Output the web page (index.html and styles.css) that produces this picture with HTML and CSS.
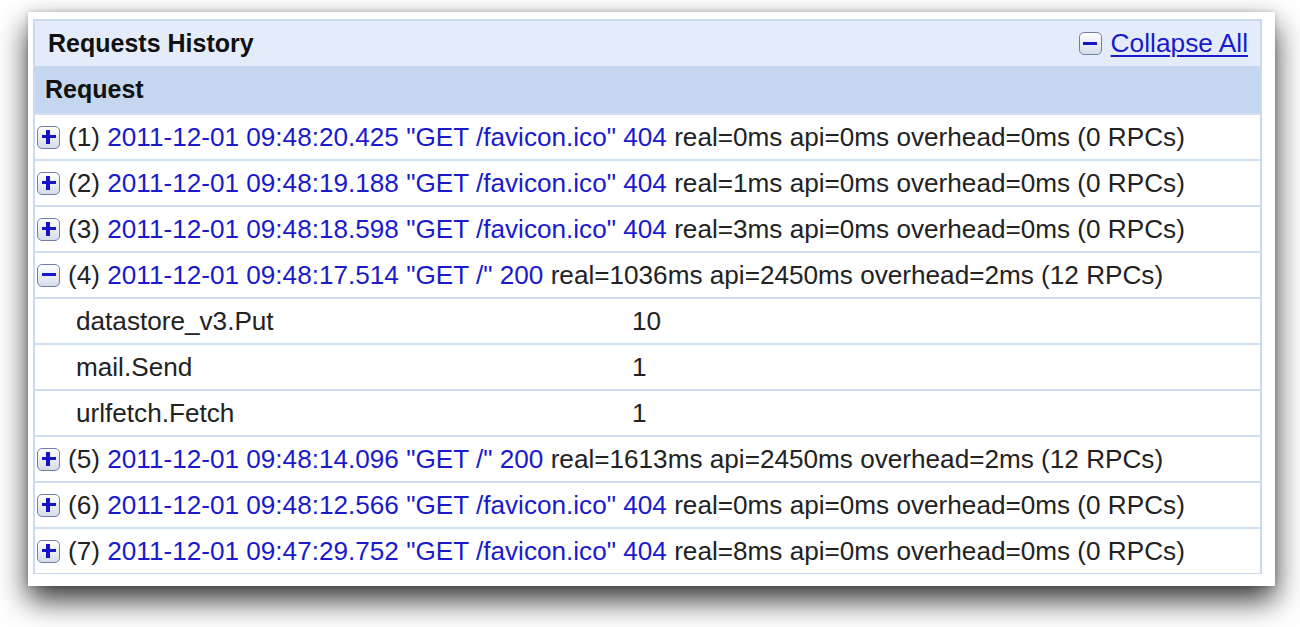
FILE: index.html
```html
<!DOCTYPE html>
<html>
<head>
<meta charset="utf-8">
<link rel="stylesheet" href="styles.css">
</head>
<body>
<div class="card">
  <div class="panel">
    <div class="titlebar">
      <span class="title">Requests History</span>
      <a class="collapse" href="#"><span class="ico minus"></span><span class="clink">Collapse All</span></a>
    </div>
    <div class="colhead">Request</div>

    <div class="row"><span class="ico plus"></span><span class="txt">(1) <a class="lnk" href="#">2011-12-01 09:48:20.425 "GET /favicon.ico" 404</a> real=0ms api=0ms overhead=0ms (0 RPCs)</span></div>
    <div class="row"><span class="ico plus"></span><span class="txt">(2) <a class="lnk" href="#">2011-12-01 09:48:19.188 "GET /favicon.ico" 404</a> real=1ms api=0ms overhead=0ms (0 RPCs)</span></div>
    <div class="row"><span class="ico plus"></span><span class="txt">(3) <a class="lnk" href="#">2011-12-01 09:48:18.598 "GET /favicon.ico" 404</a> real=3ms api=0ms overhead=0ms (0 RPCs)</span></div>
    <div class="row"><span class="ico minus"></span><span class="txt">(4) <a class="lnk" href="#">2011-12-01 09:48:17.514 "GET /" 200</a> real=1036ms api=2450ms overhead=2ms (12 RPCs)</span></div>
    <div class="sub"><span class="sname">datastore_v3.Put</span><span class="sval">10</span></div>
    <div class="sub"><span class="sname">mail.Send</span><span class="sval">1</span></div>
    <div class="sub"><span class="sname">urlfetch.Fetch</span><span class="sval">1</span></div>
    <div class="row"><span class="ico plus"></span><span class="txt">(5) <a class="lnk" href="#">2011-12-01 09:48:14.096 "GET /" 200</a> real=1613ms api=2450ms overhead=2ms (12 RPCs)</span></div>
    <div class="row"><span class="ico plus"></span><span class="txt">(6) <a class="lnk" href="#">2011-12-01 09:48:12.566 "GET /favicon.ico" 404</a> real=0ms api=0ms overhead=0ms (0 RPCs)</span></div>
    <div class="row"><span class="ico plus"></span><span class="txt">(7) <a class="lnk" href="#">2011-12-01 09:47:29.752 "GET /favicon.ico" 404</a> real=8ms api=0ms overhead=0ms (0 RPCs)</span></div>
  </div>
</div>
</body>
</html>
```

FILE: styles.css
```css
html, body {
  margin: 0;
  padding: 0;
  background: #ffffff;
}
body {
  font-family: "Liberation Sans", Arial, sans-serif;
  color: #222;
  padding: 12px 0 0 28px;
  min-height: 627px;
  box-sizing: border-box;
}
.card {
  width: 1229px;
  padding: 7px 13px 12px 5px;
  background: #fff;
  box-shadow: 0 14px 28px rgba(0, 0, 0, 0.8), 0 0 5px rgba(0, 0, 0, 0.18);
}
.panel {
  border: 2px solid #c9daf3;
  border-bottom-width: 1px;
}
.titlebar {
  height: 45px;
  background: #e5ecf9;
  display: flex;
  align-items: center;
  justify-content: space-between;
  padding: 0 12px 0 13px;
}
.title {
  font-weight: bold;
  font-size: 25px;
  color: #111;
}
.collapse {
  display: flex;
  align-items: center;
  gap: 9px;
  text-decoration: none;
}
.clink {
  font-size: 26.3px;
  color: #1a1acc;
  text-decoration: underline;
  text-underline-offset: 3px;
}
.colhead {
  height: 47px;
  background: #c5d7ef;
  display: flex;
  align-items: center;
  padding-left: 10px;
  font-weight: bold;
  font-size: 25px;
  color: #111;
}
.row, .sub {
  height: 44px;
  border-top: 2px solid #d0dff5;
  display: flex;
  align-items: center;
  font-size: 26.15px;
  white-space: pre;
}
.row {
  padding-left: 2px;
}
.txt {
  margin-left: 8px;
}
.lnk {
  color: #1a1acc;
  text-decoration: none;
}
.sub {
  padding-left: 41px;
}
.sname {
  width: 556px;
}
.ico {
  box-sizing: border-box;
  width: 23px;
  height: 23px;
  border: 1.5px solid #6f7fa6;
  border-radius: 5px;
  background: linear-gradient(#ffffff, #d6dcea);
  position: relative;
  flex: none;
}
.ico::before {
  content: "";
  position: absolute;
  left: 3.5px;
  right: 3.5px;
  top: 8.5px;
  height: 3.4px;
  background: #1414c8;
}
.ico.plus::after {
  content: "";
  position: absolute;
  top: 3.5px;
  bottom: 3.5px;
  left: 8.2px;
  width: 3.4px;
  background: #1414c8;
}
```
